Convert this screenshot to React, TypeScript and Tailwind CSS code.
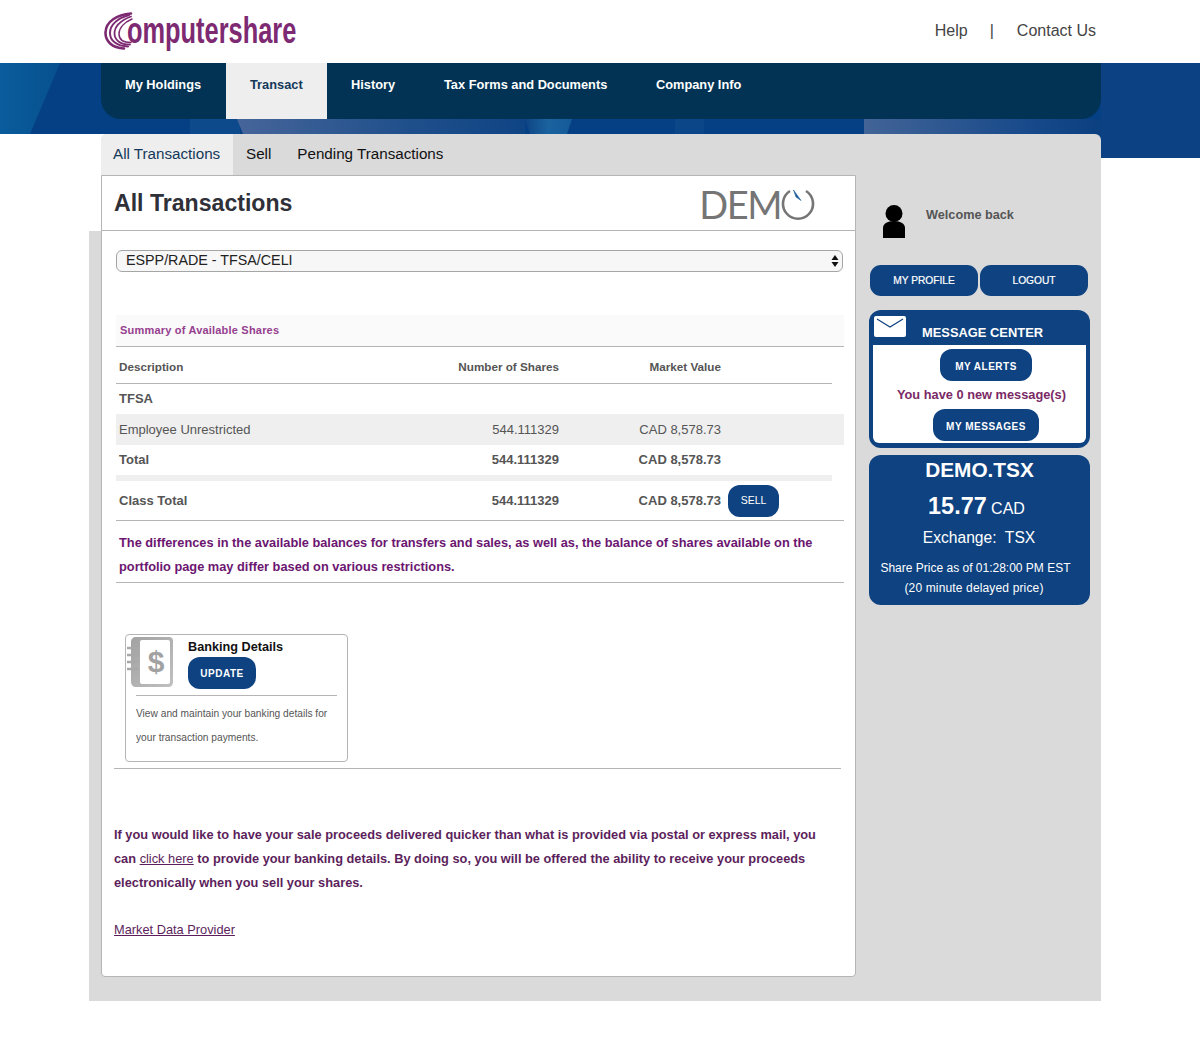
import React from "react";

const navItems = [
  { label: "My Holdings", width: "w-[125px]" },
  { label: "Transact", width: "w-[101px]" },
  { label: "History", width: "w-[93px]" },
  { label: "Tax Forms and Documents", width: "w-[212px]" },
  { label: "Company Info", width: "w-[140px]" },
];

const BlueButton: React.FC<{ label: string; className: string }> = ({ label, className }) => (
  <button className={`flex items-center justify-center bg-[#0e4280] text-white ${className}`}>
    {label}
  </button>
);

const LogoMark = () => (
  <svg width="32" height="38" viewBox="0 0 32 38" fill="none" stroke="#7d2a72" strokeLinecap="round">
    <path d="M27 1.5C13 3 2 9 1.5 20.5C1.2 29 8 36 20 36.5" strokeWidth="2.6" />
    <path d="M25 3C15 6 6 12 6 21C6 29 13 34 24 34.5" strokeWidth="2" />
    <path d="M27 4.5C18 8 10.500 14 10.500 21.500C10.500 28 16 32.500 26 32.500" strokeWidth="1.800" />
    <path d="M28 7C21 10 15 15.500 15 22C15 27 19 30.500 27 30.500" strokeWidth="1.500" />
  </svg>
);

const BandArt = () => (
  <svg className="absolute left-0 top-[63px]" width="1200" height="95" viewBox="0 0 1200 95">
    <defs>
      <linearGradient id="bandLeft" x1="0" y1="0" x2="1" y2="0">
        <stop offset="0" stopColor="#0a5c9c" />
        <stop offset="1" stopColor="#07508f" />
      </linearGradient>
      <linearGradient id="bandLower" x1="0" y1="0" x2="1" y2="0">
        <stop offset="0" stopColor="#46659a" />
        <stop offset="0.6" stopColor="#1f4f8b" />
        <stop offset="1" stopColor="#0f4484" />
      </linearGradient>
      <linearGradient id="bandBlue" x1="0" y1="0" x2="1" y2="0">
        <stop offset="0" stopColor="#0f4484" />
        <stop offset="0.5" stopColor="#1a639f" />
        <stop offset="1" stopColor="#145a98" />
      </linearGradient>
      <linearGradient id="bandRight" x1="0" y1="0" x2="1" y2="0">
        <stop offset="0" stopColor="#426497" />
        <stop offset="0.7" stopColor="#17498a" />
        <stop offset="1" stopColor="#0a3f80" />
      </linearGradient>
    </defs>
    <rect x="0" y="0" width="1200" height="71" fill="#053f84" />
    <polygon points="0,0 60,0 30,71 0,71" fill="url(#bandLeft)" />
    <rect x="190" y="56" width="50" height="15" fill="#0c4a8c" />
    <polygon points="237,56 525,56 525,71 243,71" fill="url(#bandLower)" />
    <polygon points="525,56 572,56 567,71 530,71" fill="url(#bandBlue)" />
    <rect x="675" y="56" width="29" height="15" fill="#0b4788" />
    <rect x="864" y="56" width="240" height="39" fill="url(#bandRight)" />
    <rect x="1101" y="0" width="99" height="95" fill="#0c4284" />
  </svg>
);

const DemoMark = () => (
  <svg width="34" height="34" viewBox="0 0 34 34" fill="none">
    <path d="M9 4A15 15 0 1 0 25 4" stroke="#757575" strokeWidth="2.600" />
    <path d="M12.500 3L20 13.500L15 10Z" fill="#1d5f9c" stroke="#1d5f9c" strokeWidth="0.600" />
  </svg>
);

const BookIcon = () => (
  <svg width="48" height="52" viewBox="0 0 48 52">
    <defs>
      <linearGradient id="bookFill" x1="0" y1="0" x2="1" y2="1">
        <stop offset="0" stopColor="#a2a2a2" />
        <stop offset="1" stopColor="#c0c0c0" />
      </linearGradient>
    </defs>
    <path d="M10 2C7 2 5 4 5 7V46C5 50 7 52 10 52H42C45 52 47 50 47 47V6C47 4 46 2 43 2Z" fill="url(#bookFill)" />
    <rect x="14" y="5" width="30" height="44" rx="2" fill="#fff" />
    <path d="M1 13H12M1 20H12M1 27H12M1 34H12" stroke="#a8a8a8" strokeWidth="2.500" />
    <text x="30" y="37" textAnchor="middle" fill="#a2a2a2" fontSize="30" fontWeight="700" fontFamily="Liberation Sans">
      $
    </text>
  </svg>
);

const gridRow = "grid grid-cols-[280px_160px_162px_auto] items-center pl-[3px] text-[#555]";

export default function App() {
  return (
    <div className="relative w-[1200px] h-[1063px] overflow-hidden bg-white font-['Liberation_Sans',Arial,sans-serif]">
      <BandArt />
      {/* grey strip that sticks out left of the content panel */}
      <div className="absolute left-[89px] top-[231px] w-[12px] h-[770px] bg-[#dadada]" />

      <header className="relative h-[63px] pl-[104px] pr-[104px] flex items-start justify-between">
        <div className="flex items-start pt-[12px]">
          <LogoMark />
          <span className="-ml-[9px] text-[36px] leading-[38px] font-bold text-[#7d2a72] origin-left scale-x-[0.705]">
            omputershare
          </span>
        </div>
        <div className="flex items-center pt-[22px] text-[16px] leading-[18px] text-[#444]">
          <span>Help</span>
          <span className="ml-[22px]">|</span>
          <span className="ml-[23px]">Contact Us</span>
        </div>
      </header>

      <nav className="relative ml-[101px] w-[1000px] h-[56px] flex bg-[#023354] rounded-b-[20px] overflow-hidden">
        {navItems.map((item) => (
          <div
            key={item.label}
            className={`${item.width} pl-[24px] pt-[13px] text-[12.8px] leading-[17px] font-bold whitespace-nowrap ${
              item.label === "Transact" ? "bg-[#eeeeee] text-[#14395a]" : "text-white"
            }`}
          >
            {item.label}
          </div>
        ))}
      </nav>

      <main className="relative mt-[15px] ml-[101px] w-[1000px] h-[867px] bg-[#dadada] rounded-t-[6px] flex items-start">
        <div className="w-[755px] shrink-0">
          <div className="h-[41px] flex text-[15.2px] text-[#111]">
            <div className="w-[132px] pl-[12px] flex items-center bg-[#eeeeee] text-[#14395a] rounded-tl-[6px]">All Transactions</div>
            <div className="pl-[13px] flex items-center">Sell</div>
            <div className="pl-[26px] flex items-center">Pending Transactions</div>
          </div>

          <section className="h-[802px] bg-white border border-[#b5b5b5] rounded-b-[4px]">
            <div className="h-[55px] pl-[12px] pr-[40px] border-b border-[#b5b5b5] flex items-center justify-between">
              <h1 className="text-[23.1px] font-bold text-[#2f3038]">All Transactions</h1>
              <div className="flex items-center mt-[1px]">
                <span className="text-[38px] leading-[44px] text-[#757575] font-['Lato',sans-serif] font-normal tracking-[-1.5px]">DEM</span>
                <DemoMark />
              </div>
            </div>

            <div className="relative mt-[19px] ml-[14px] w-[727px] h-[22px] border border-[#a5a5a5] rounded-[6px] bg-[#f7f7f7] pl-[9px] text-[14.3px] leading-[19px] text-[#222]">
              ESPP/RADE - TFSA/CELI
              <svg className="absolute right-[3px] top-[4px]" width="8" height="12" viewBox="0 0 8 12">
                <path d="M4 0L7.500 5H0.500Z M4 12L0.500 7H7.500Z" fill="#111" />
              </svg>
            </div>

            <div className="mt-[43px] ml-[14px] w-[728px]">
              <div className="h-[32px] bg-[#fafafa] border-b border-[#b5b5b5] pl-[4px] flex items-center text-[11px] font-bold tracking-[0.2px] text-[#96408f]">
                Summary of Available Shares
              </div>
              <div className={`${gridRow} h-[37px] w-[716px] pt-[4px] border-b border-[#b5b5b5] text-[11.7px] font-bold`}>
                <span>Description</span>
                <span className="text-right">Number of Shares</span>
                <span className="text-right">Market Value</span>
              </div>
              <div className="h-[30px] pl-[3px] flex items-center text-[13px] font-bold text-[#555]">TFSA</div>
              <div className={`${gridRow} h-[31px] bg-[#efefef] text-[13px]`}>
                <span>Employee Unrestricted</span>
                <span className="text-right">544.111329</span>
                <span className="text-right">CAD 8,578.73</span>
              </div>
              <div className={`${gridRow} h-[30px] text-[13px] font-bold`}>
                <span>Total</span>
                <span className="text-right">544.111329</span>
                <span className="text-right">CAD 8,578.73</span>
              </div>
              <div className="h-[6px] w-[716px] bg-[#efefef]" />
              <div className={`${gridRow} h-[40px] border-b border-[#b5b5b5] text-[13px] font-bold`}>
                <span>Class Total</span>
                <span className="text-right">544.111329</span>
                <span className="text-right">CAD 8,578.73</span>
                <BlueButton label="SELL" className="ml-[7px] mt-[1px] w-[51px] h-[32px] rounded-[12px] text-[10.5px] font-normal" />
              </div>
              <p className="h-[62px] pt-[10px] pl-[3px] border-b border-[#b5b5b5] text-[12.8px] leading-[24px] font-bold text-[#6b1670]">
                The differences in the available balances for transfers and sales, as well as, the balance of shares available on the portfolio page may differ based on various restrictions.
              </p>
            </div>

            <div className="mt-[51px] ml-[23px] w-[223px] h-[128px] border border-[#b5b5b5] rounded-[4px] px-[10px] relative">
              <div className="flex h-[60px] -ml-[10px]">
                <BookIcon />
                <div className="ml-[14px] pt-[5px]">
                  <div className="text-[12.7px] leading-[15px] font-bold text-[#111]">Banking Details</div>
                  <BlueButton label="UPDATE" className="mt-[2px] w-[68px] h-[32px] rounded-[12px] text-[10px] font-bold tracking-[0.5px]" />
                </div>
              </div>
              <div className="border-t border-[#b5b5b5] pt-[6px] text-[10.2px] leading-[24px] text-[#555]">
                View and maintain your banking details for your transaction payments.
              </div>
            </div>

            <div className="mt-[6px] ml-[12px] w-[727px] border-t border-[#b5b5b5]" />

            <p className="mt-[54px] ml-[12px] w-[720px] text-[12.8px] leading-[24px] font-bold text-[#5c1f5c]">
              If you would like to have your sale proceeds delivered quicker than what is provided via postal or express mail, you can{" "}
              <a className="font-normal underline">click here</a> to provide your banking details. By doing so, you will be offered the ability to receive your proceeds electronically when you sell your shares.
            </p>
            <a className="block mt-[23px] ml-[12px] text-[12.8px] leading-[24px] underline text-[#5c1f5c]">Market Data Provider</a>
          </section>
        </div>

        <aside className="ml-[13px] w-[221px] pt-[71px]">
          <div className="h-[60px] flex">
            <svg className="ml-[14px]" width="22" height="33" viewBox="0 0 22 33">
              <circle cx="11" cy="8.500" r="8.500" fill="#000" />
              <path d="M0 33V23C0 19 4 16 11 16C18 16 22 19 22 23V33Z" fill="#000" />
            </svg>
            <div className="ml-[21px] pt-[3px] text-[12.7px] leading-[14px] font-bold text-[#555]">Welcome back</div>
          </div>
          <div className="flex gap-[2px] pl-[1px]">
            <BlueButton label="MY PROFILE" className="w-[108px] h-[31px] rounded-[11px] text-[10.2px] [-webkit-text-stroke:0.2px_white]" />
            <BlueButton label="LOGOUT" className="w-[108px] h-[31px] rounded-[11px] text-[10.2px] [-webkit-text-stroke:0.2px_white]" />
          </div>

          <div className="mt-[14px] h-[138px] bg-[#0e4280] rounded-[12px] px-[4px] pb-[5px] flex flex-col">
            <div className="relative h-[35px] shrink-0">
              <svg className="absolute left-[1px] top-[6px]" width="32" height="21" viewBox="0 0 32 21">
                <rect width="32" height="21" rx="2" fill="#fff" />
                <path d="M3 3L16 11L29 3" fill="none" stroke="#0e4280" strokeWidth="1.200" />
              </svg>
              <div className="absolute left-[49px] top-[15px] text-[12.9px] leading-[15px] font-bold text-white whitespace-nowrap">MESSAGE CENTER</div>
            </div>
            <div className="flex-1 bg-white rounded-b-[6px] flex flex-col items-center pt-[4px]">
              <BlueButton label="MY ALERTS" className="w-[92px] h-[32px] pt-[2px] rounded-[12px] text-[10px] font-bold tracking-[0.5px] ml-[13px]" />
              <div className="mt-[6px] ml-[4px] text-[12.8px] leading-[16px] font-bold text-[#7a2a66]">You have 0 new message(s)</div>
              <BlueButton label="MY MESSAGES" className="mt-[6px] w-[106px] h-[32px] pt-[2px] rounded-[12px] text-[10px] font-bold tracking-[0.5px] ml-[13px]" />
            </div>
          </div>

          <div className="mt-[7px] h-[150px] bg-[#0e4280] rounded-[12px] text-white text-center flex flex-col items-center">
            <div className="mt-[3px] text-[20.8px] leading-[24px] font-bold">DEMO.TSX</div>
            <div className="mt-[10px] -ml-[6px] leading-[28px]">
              <span className="text-[23.4px] font-bold">15.77</span> <span className="text-[16px]">CAD</span>
            </div>
            <div className="mt-[5px] -ml-[1px] text-[15.6px] leading-[20px] whitespace-pre">Exchange:  TSX</div>
            <div className="mt-[10px] -ml-[8px] text-[12px] leading-[20px]">
              Share Price as of 01:28:00 PM EST
              <br />
              <span className="tracking-[0.15px] -ml-[3px]">(20 minute delayed price)</span>
            </div>
          </div>
        </aside>
      </main>
    </div>
  );
}
